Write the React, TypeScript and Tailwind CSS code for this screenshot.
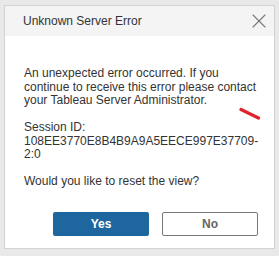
import { X } from 'lucide-react'

// --- Error Dialog ---

const ErrorDialog = () => (
  <div className="relative w-[271px] h-[244px] bg-white border border-[#d2d2d2] flex flex-col">
    {/* Header */}
    <div className="h-[30px] bg-[#f4f4f4] flex items-center justify-between pl-[18px] pr-[3px]">
      <span className="text-[12px] leading-[14px] text-[#333]">Unknown Server Error</span>
      <X className="w-[24px] h-[24px] text-[#777]" strokeWidth={1.1} />
    </div>

    {/* Body */}
    <div className="flex flex-col pt-[31px] pl-[19px] pr-[12px] text-[12px] leading-[13.5px] text-[#333]">
      <p className="mb-[13.5px]">
        An unexpected error occurred. If you continue to receive this error please contact your
        Tableau Server Administrator.
      </p>
      <p className="mb-[13px]">
        Session ID:
        <br />
        108EE3770E8B4B9A9A5EECE997E37709-
        <br />
        2:0
      </p>
      <p>Would you like to reset the view?</p>
    </div>

    {/* Actions */}
    <div className="flex justify-end gap-[13px] mt-[24px] pr-[16px]">
      <button className="w-[96px] h-[24px] rounded-[2px] bg-[#1e679e] text-white text-[12px] font-bold">
        Yes
      </button>
      <button className="w-[96px] h-[24px] rounded-[2px] bg-white border border-[#777] text-[#666] text-[12px] font-bold">
        No
      </button>
    </div>

    {/* Red annotation stroke */}
    <svg className="absolute left-[234px] top-[101px]" width="22" height="14" viewBox="0 0 22 14">
      <path d="M2 2.5 L19.5 11" stroke="#e0242c" strokeWidth="3.2" strokeLinecap="round" />
    </svg>
  </div>
)

const App = () => (
  <div className="w-[279px] h-[256px] bg-[#e9e9e9] pt-[5px] pl-[4px] font-['Liberation_Sans',Arial,sans-serif]">
    <ErrorDialog />
  </div>
)

export default App
